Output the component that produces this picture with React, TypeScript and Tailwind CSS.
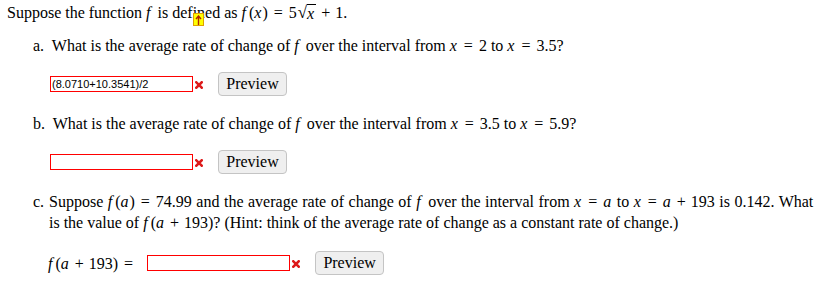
import React from "react";

const serif = { fontFamily: '"Liberation Serif", "Times New Roman", serif' };

// math italic letters, padded out to roughly MathJax widths
function F() {
  return <span className="italic pr-[3px]">f</span>;
}

function V({ children }: { children: React.ReactNode }) {
  return <span className="italic pr-[1px]">{children}</span>;
}

function Eq() {
  return <span className="inline-block w-[12px] text-center mx-[4.5px]">=</span>;
}

function Plus() {
  return <span className="inline-block w-[12px] text-center mx-[3.5px]">+</span>;
}

function RedX() {
  return (
    <svg width="8" height="8" viewBox="0 0 8 8" className="ml-[2px] mt-[1px]">
      <path d="M1.3 1.3 L6.7 6.7 M6.7 1.3 L1.3 6.7" stroke="#dd1a1a" strokeWidth="2.6" strokeLinecap="square" />
    </svg>
  );
}

function AnswerRow({ value }: { value?: string }) {
  return (
    <div className="flex items-center h-[24px]">
      <div
        className="w-[143px] h-[16px] border border-[#ff0000] bg-white text-[11px] leading-[14px] pl-[1px] text-black"
        style={{ fontFamily: '"Liberation Sans", Arial, sans-serif' }}
      >
        {value}
      </div>
      <RedX />
      <button className="ml-[15px] h-[24px] w-[69px] rounded-[4px] border border-[#c4c4c4] bg-[#efefef] text-[16px] leading-[20px] text-black">
        Preview
      </button>
    </div>
  );
}

export default function App() {
  return (
    <div className="relative w-[823px] h-[304px] bg-white text-black text-[16px] leading-[21px]" style={serif}>
      <div className="pl-[7px] pt-[2px] whitespace-nowrap">
        Suppose the function <F /> is defined as <F />(<V>x</V>)<Eq />5
        <span className="inline-flex items-start">
          <span className="text-[17px] pl-[1px]">√</span>
          <span className="border-t border-black leading-[17px] mt-[2px] italic pr-[2px]">x</span>
        </span>
        <Plus />1.
      </div>

      <div className="absolute left-[193px] top-[13px] w-[11px] h-[13px] bg-[#ffff00] border border-[#e0a000] flex items-center justify-center">
        <svg width="7" height="10" viewBox="0 0 7 10">
          <path d="M3.5 1 L3.5 10 M1 4 L3.5 1 L6 4" stroke="#b02a00" strokeWidth="1.4" fill="none" />
        </svg>
      </div>

      <div className="pl-[33px] mt-[12px] whitespace-nowrap">
        a.&nbsp; What is the average rate of change of <F /> over the interval from <V>x</V>
        <Eq />2 to <V>x</V>
        <Eq />3.5?
      </div>
      <div className="pl-[50px] mt-[16px]">
        <AnswerRow value="(8.0710+10.3541)/2" />
      </div>

      <div className="pl-[33px] mt-[17px] whitespace-nowrap">
        b.&nbsp; What is the average rate of change of <F /> over the interval from <V>x</V>
        <Eq />3.5 to <V>x</V>
        <Eq />5.9?
      </div>
      <div className="pl-[50px] mt-[16px]">
        <AnswerRow />
      </div>

      <div className="flex pl-[33px] mt-[17px]">
        <span className="w-[16px] shrink-0">c.</span>
        <div>
          <div className="whitespace-nowrap [word-spacing:0.5px]">
            Suppose <F />(<V>a</V>)<Eq />74.99 and the average rate of change of <F /> over the interval from{" "}
            <V>x</V>
            <Eq />
            <V>a</V> to <V>x</V>
            <Eq />
            <V>a</V>
            <Plus />
            193 is 0.142. What
          </div>
          <div className="whitespace-nowrap">
            is the value of <F />(<V>a</V>
            <Plus />
            193)? (Hint: think of the average rate of change as a constant rate of change.)
          </div>
        </div>
      </div>

      <div className="flex items-center pl-[48px] mt-[18px]">
        <span className="mr-[8px] whitespace-nowrap">
          <F />(<V>a</V>
          <Plus />
          193)<Eq />
        </span>
        <AnswerRow />
      </div>
    </div>
  );
}
